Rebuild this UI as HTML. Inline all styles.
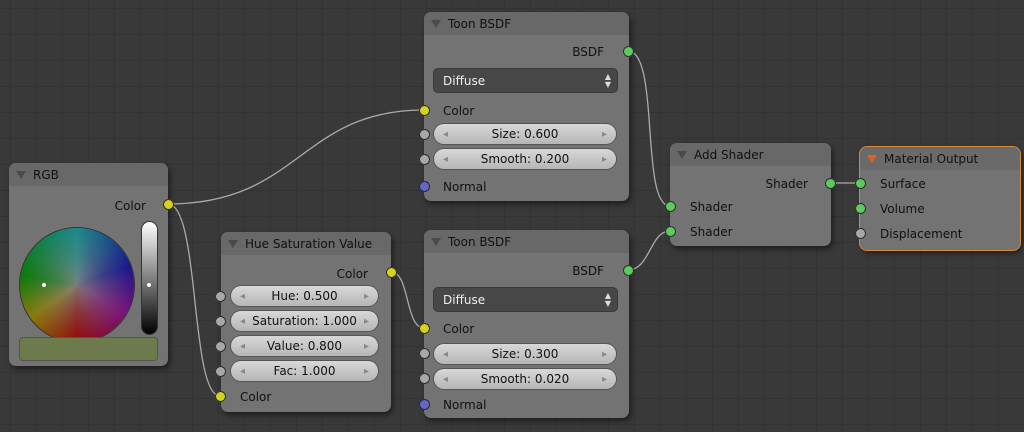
<!DOCTYPE html><html><head><style>
body{margin:0;width:1024px;height:432px;overflow:hidden;background-color:#393939;
background-image:linear-gradient(#333 1px,transparent 1px),linear-gradient(90deg,#333 1px,transparent 1px);background-size:26px 26px;background-position:10px 8px;
font-family:"DejaVu Sans","Liberation Sans",sans-serif;font-size:12px;color:#111;position:relative}
.n{position:absolute;background:#737373;border-radius:7px;box-shadow:2px 3px 6px rgba(0,0,0,.5);}
.h{height:23px;background:#686868;border-radius:7px 7px 0 0;line-height:25px;padding-left:24px;position:relative;color:#111}
.h:before{content:"";position:absolute;left:7px;top:8px;border-left:5px solid transparent;border-right:5px solid transparent;border-top:8px solid #4a4a4a}
.h.o:before{border-top-color:#e0621a}
.t{position:absolute;white-space:nowrap}
.s{position:absolute;width:11px;height:11px;border-radius:50%;margin:-5.5px 0 0 -5.5px;background:#a8a8a8;box-shadow:0 0 0 1px #2a2a2a inset}
.y{background:#d6d21e}.g{background:#5ec95e}.b{background:#6565cc}
.f{position:absolute;height:20px;border-radius:10px;background:linear-gradient(#d8d8d8,#b6b6b6);box-shadow:0 0 0 1px #555;text-align:center;line-height:21px;color:#111}
.f:before{content:"◂";position:absolute;left:9px;color:#888;font-size:10px}
.f:after{content:"▸";position:absolute;right:9px;color:#888;font-size:10px}
.d{position:absolute;height:23px;border-radius:4px;background:#474747;color:#eee;line-height:24px;padding-left:9px;box-shadow:0 0 0 1px #3a3a3a}
.d span{position:absolute;right:6px;top:0;font-size:8px;line-height:8px;padding-top:4px;color:#ddd}
</style></head><body>
<svg width="1024" height="432" style="position:absolute;left:0;top:0" fill="none" stroke="#aaa" stroke-width="1.3">
<path d="M168 204 C300 204 300 110 424 110"/>
<path d="M168 204 C200 204 190 396 220 396"/>
<path d="M391 272 C410 272 405 328 424 328"/>
<path d="M628 51 C660 51 640 206 670 206"/>
<path d="M628 270 C650 270 650 231 670 231"/>
<path d="M830 183 L860 183"/>
</svg>
<div class="n" style="left:9px;top:163px;width:159px;height:203px">
<div class="h">RGB</div>
<div class="t" style="right:22px;top:36px">Color</div>
<div style="position:absolute;left:11px;top:65px;width:114px;height:114px;border-radius:50%;background:radial-gradient(circle,rgba(130,130,130,.85) 0%,rgba(130,130,130,.35) 35%,rgba(130,130,130,0) 70%),conic-gradient(#1a8a8a 0deg,#16168a 70deg,#7a107a 120deg,#900808 180deg,#8a7a08 235deg,#087a08 280deg,#1a8a8a 360deg);box-shadow:0 0 0 1px #333"></div>
<div style="position:absolute;left:33px;top:120px;width:4px;height:4px;border-radius:50%;background:#fff"></div>
<div style="position:absolute;left:133px;top:59px;width:15px;height:112px;border-radius:8px;background:linear-gradient(#fff,#000);box-shadow:0 0 0 1px #333"></div>
<div style="position:absolute;left:138px;top:120px;width:4px;height:4px;border-radius:50%;background:#fff"></div>
<div style="position:absolute;left:11px;top:175px;width:137px;height:22px;border-radius:3px;background:#6d7a4c;box-shadow:0 0 0 1px #555"></div>
</div>
<div class="s y" style="left:168px;top:204px"></div>
<div class="n" style="left:221px;top:232px;width:170px;height:180px">
<div class="h">Hue Saturation Value</div>
<div class="t" style="right:23px;top:35px">Color</div>
<div class="f" style="left:10px;top:54px;width:147px">Hue: 0.500</div>
<div class="f" style="left:10px;top:79px;width:147px">Saturation: 1.000</div>
<div class="f" style="left:10px;top:104px;width:147px">Value: 0.800</div>
<div class="f" style="left:10px;top:129px;width:147px">Fac: 1.000</div>
<div class="t" style="left:19px;top:158px">Color</div>
</div>
<div class="s y" style="left:391px;top:272px"></div>
<div class="s" style="left:220px;top:296px"></div><div class="s" style="left:220px;top:321px"></div><div class="s" style="left:220px;top:346px"></div><div class="s" style="left:220px;top:371px"></div>
<div class="s y" style="left:220px;top:396px"></div>
<div class="n" style="left:424px;top:12px;width:205px;height:189px">
<div class="h">Toon BSDF</div>
<div class="t" style="right:25px;top:33px">BSDF</div>
<div class="d" style="left:10px;top:57px;width:174px">Diffuse<span>▲<br>▼</span></div>
<div class="t" style="left:19px;top:92px">Color</div>
<div class="f" style="left:10px;top:112px;width:182px">Size: 0.600</div>
<div class="f" style="left:10px;top:137px;width:182px">Smooth: 0.200</div>
<div class="t" style="left:19px;top:168px">Normal</div>
</div>
<div class="s g" style="left:628px;top:51px"></div>
<div class="s y" style="left:424px;top:110px"></div><div class="s" style="left:424px;top:134px"></div><div class="s" style="left:424px;top:159px"></div><div class="s b" style="left:424px;top:186px"></div>
<div class="n" style="left:424px;top:230px;width:205px;height:188px">
<div class="h">Toon BSDF</div>
<div class="t" style="right:25px;top:34px">BSDF</div>
<div class="d" style="left:10px;top:58px;width:174px">Diffuse<span>▲<br>▼</span></div>
<div class="t" style="left:19px;top:92px">Color</div>
<div class="f" style="left:10px;top:114px;width:182px">Size: 0.300</div>
<div class="f" style="left:10px;top:139px;width:182px">Smooth: 0.020</div>
<div class="t" style="left:19px;top:168px">Normal</div>
</div>
<div class="s g" style="left:628px;top:270px"></div>
<div class="s y" style="left:424px;top:328px"></div><div class="s" style="left:424px;top:353px"></div><div class="s" style="left:424px;top:378px"></div><div class="s b" style="left:424px;top:404px"></div>
<div class="n" style="left:670px;top:143px;width:161px;height:103px">
<div class="h">Add Shader</div>
<div class="t" style="right:23px;top:34px">Shader</div>
<div class="t" style="left:20px;top:57px">Shader</div>
<div class="t" style="left:20px;top:82px">Shader</div>
</div>
<div class="s g" style="left:830px;top:183px"></div><div class="s g" style="left:670px;top:206px"></div><div class="s g" style="left:670px;top:231px"></div>
<div class="n" style="left:860px;top:147px;width:160px;height:103px;box-shadow:0 0 0 1px #d08a3a,2px 3px 6px rgba(0,0,0,.5)">
<div class="h o" style="background:#6a6a6a">Material Output</div>
<div class="t" style="left:20px;top:30px">Surface</div>
<div class="t" style="left:20px;top:55px">Volume</div>
<div class="t" style="left:20px;top:80px">Displacement</div>
</div>
<div class="s g" style="left:860px;top:183px"></div><div class="s g" style="left:860px;top:208px"></div><div class="s" style="left:860px;top:233px"></div>
</body></html>
